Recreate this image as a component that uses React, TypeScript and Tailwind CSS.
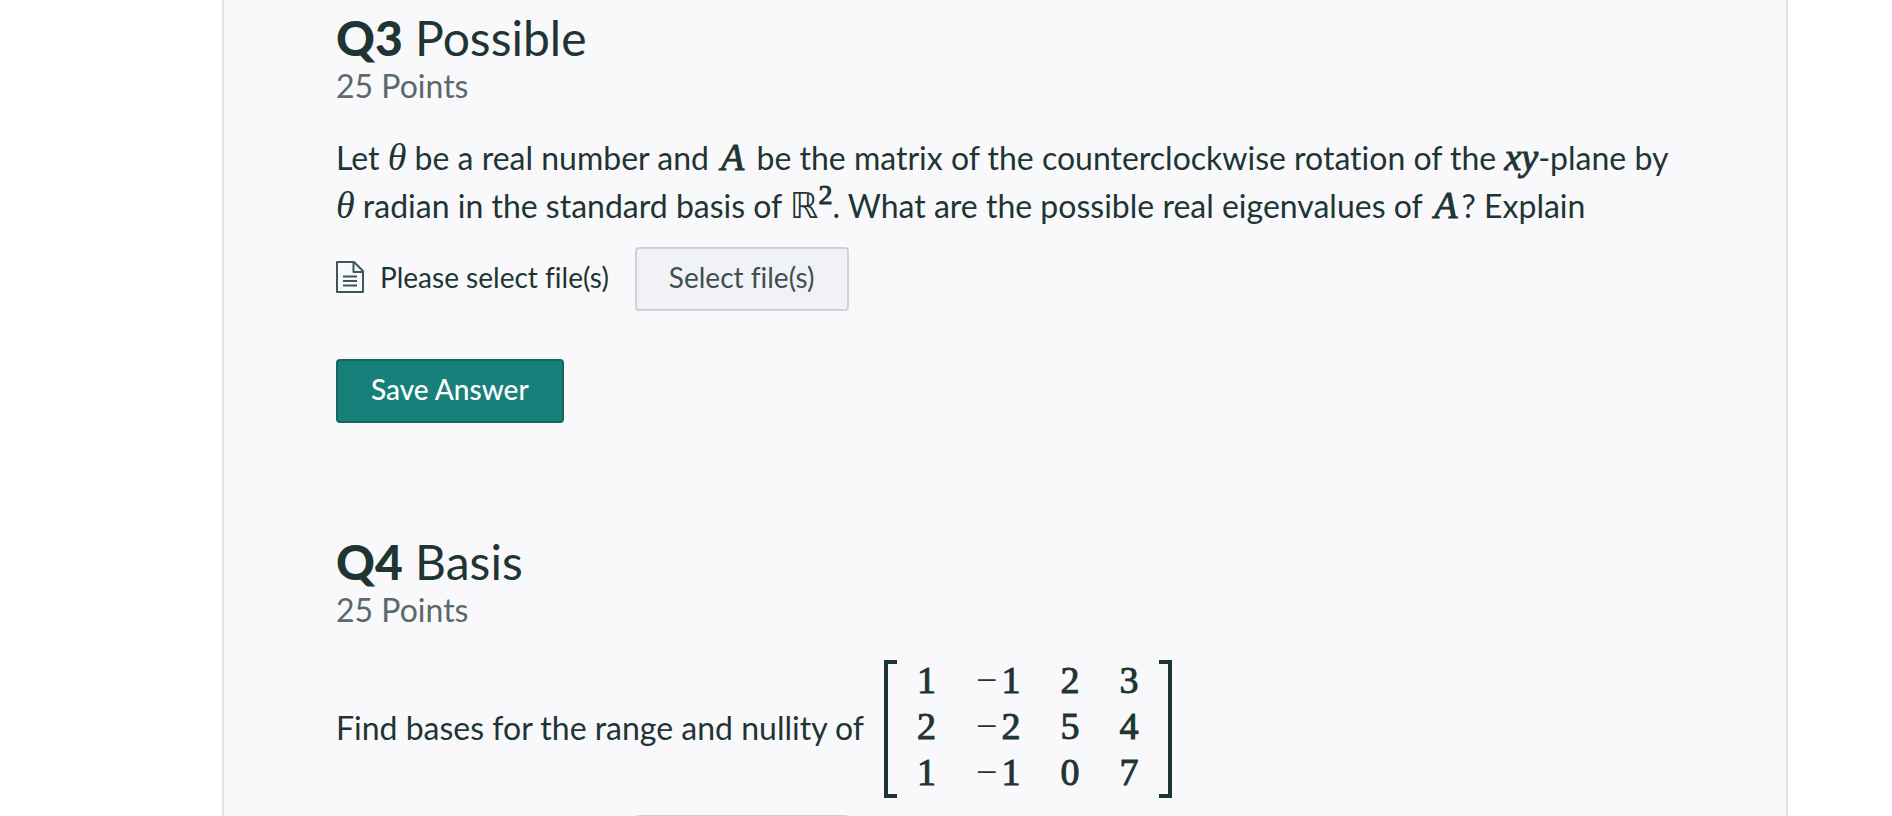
import { ReactNode } from 'react'
import clsx from 'clsx'

interface QuestionProps {
  number: number
  title: string
  points: number
  className?: string
  children: ReactNode
}

const MATRIX = [
  [1, -1, 2, 3],
  [2, -2, 5, 4],
  [1, -1, 0, 7],
]

function FileIcon() {
  return (
    <svg
      className="h-8 w-7 shrink-0"
      viewBox="0 0 28 32"
      fill="none"
      stroke="#3f5755"
      strokeWidth="2"
      strokeLinejoin="round"
      aria-hidden="true"
    >
      <path d="M1 1H18L27 10V31H1Z" />
      <path d="M17.5 1V11H27" />
      <path d="M7 15.5H21M7 20H21M7 24.5H21" />
    </svg>
  )
}

function MathText({ className, children }: { className?: string; children: ReactNode }) {
  return (
    <span
      className={clsx(
        "font-['Liberation_Serif',serif] text-[38px] leading-none italic",
        className,
      )}
    >
      {children}
    </span>
  )
}

function Matrix({ rows }: { rows: number[][] }) {
  return (
    <div className="flex">
      <div className="w-[13px] border-4 border-r-0 border-[#1f3533]" />
      <table className="font-['Liberation_Serif',serif] text-[38px] leading-[40px] [-webkit-text-stroke:1px_#1f3533]">
        <tbody>
          {rows.map((row, i) => (
            <tr key={i}>
              {row.map((value, j) => (
                <td key={j} className="px-5 pt-0 pb-[6px] text-center whitespace-nowrap">
                  {value < 0 && (
                    <span className="mr-1 [-webkit-text-stroke:0px]">{'\u2212'}</span>
                  )}
                  {Math.abs(value)}
                </td>
              ))}
            </tr>
          ))}
        </tbody>
      </table>
      <div className="w-[13px] border-4 border-l-0 border-[#1f3533]" />
    </div>
  )
}

function Question({ number, title, points, className, children }: QuestionProps) {
  return (
    <section className={className}>
      <h2 className="text-[48px] leading-[56px]">
        <span className="font-black">Q{number}</span> {title}
      </h2>
      <p className="text-[32px] leading-10 text-[#5a696c]">{points} Points</p>
      {children}
    </section>
  )
}

function FileRow() {
  return (
    <div className="mt-[17px] flex items-center text-[28px] leading-8">
      <div className="flex items-center gap-4 pb-1">
        <FileIcon />
        <span>Please select file(s)</span>
      </div>
      <button
        type="button"
        className="ml-[26px] h-16 rounded-sm border-2 border-[#cbd3d9] bg-[#f1f2f6] px-8 pb-1 text-[#3f4f50]"
      >
        Select file(s)
      </button>
    </div>
  )
}

export default function App() {
  return (
    <div className="h-screen overflow-hidden bg-white pr-[104px] pl-[222px]">
      <main className="min-h-full border-x-2 border-[#dfe3ea] bg-[#f9f9fc] px-28 pt-[10px] font-[Lato,sans-serif] text-[#1f3533] [font-variant-ligatures:none]">
        <Question number={3} title="Possible" points={25}>
          <p className="mt-7 text-[32px] leading-[48px]">
            Let <MathText>θ</MathText> be a real number and{' '}
            <MathText className="mx-1 [-webkit-text-stroke:1px_#1f3533]">A</MathText> be the
            matrix of the counterclockwise rotation of the{' '}
            <MathText className="[-webkit-text-stroke:1px_#1f3533]">xy</MathText>-plane by{' '}
            <MathText>θ</MathText> radian in the standard basis of{' '}
            <span className="font-['DejaVu_Sans',sans-serif] text-[36px] leading-none">ℝ</span>
            <sup className="top-[-14px] font-['Liberation_Serif',serif] text-[28px] [-webkit-text-stroke:1px_#1f3533]">
              2
            </sup>
            . What are the possible real eigenvalues of{' '}
            <MathText className="mx-1 [-webkit-text-stroke:1px_#1f3533]">A</MathText>? Explain
          </p>
          <FileRow />
          <button
            type="button"
            className="mt-12 h-16 rounded-sm border-2 border-[#17655f] bg-[#17807b] px-[33px] pb-1 text-[28px] leading-8 font-medium text-white"
          >
            Save Answer
          </button>
        </Question>

        <Question number={4} title="Basis" points={25} className="mt-[111px]">
          <div className="mt-[30px] flex items-center text-[32px] leading-[48px]">
            <p className="mr-5 pb-[2px]">Find bases for the range and nullity of</p>
            <Matrix rows={MATRIX} />
          </div>
          <FileRow />
        </Question>
      </main>
    </div>
  )
}
